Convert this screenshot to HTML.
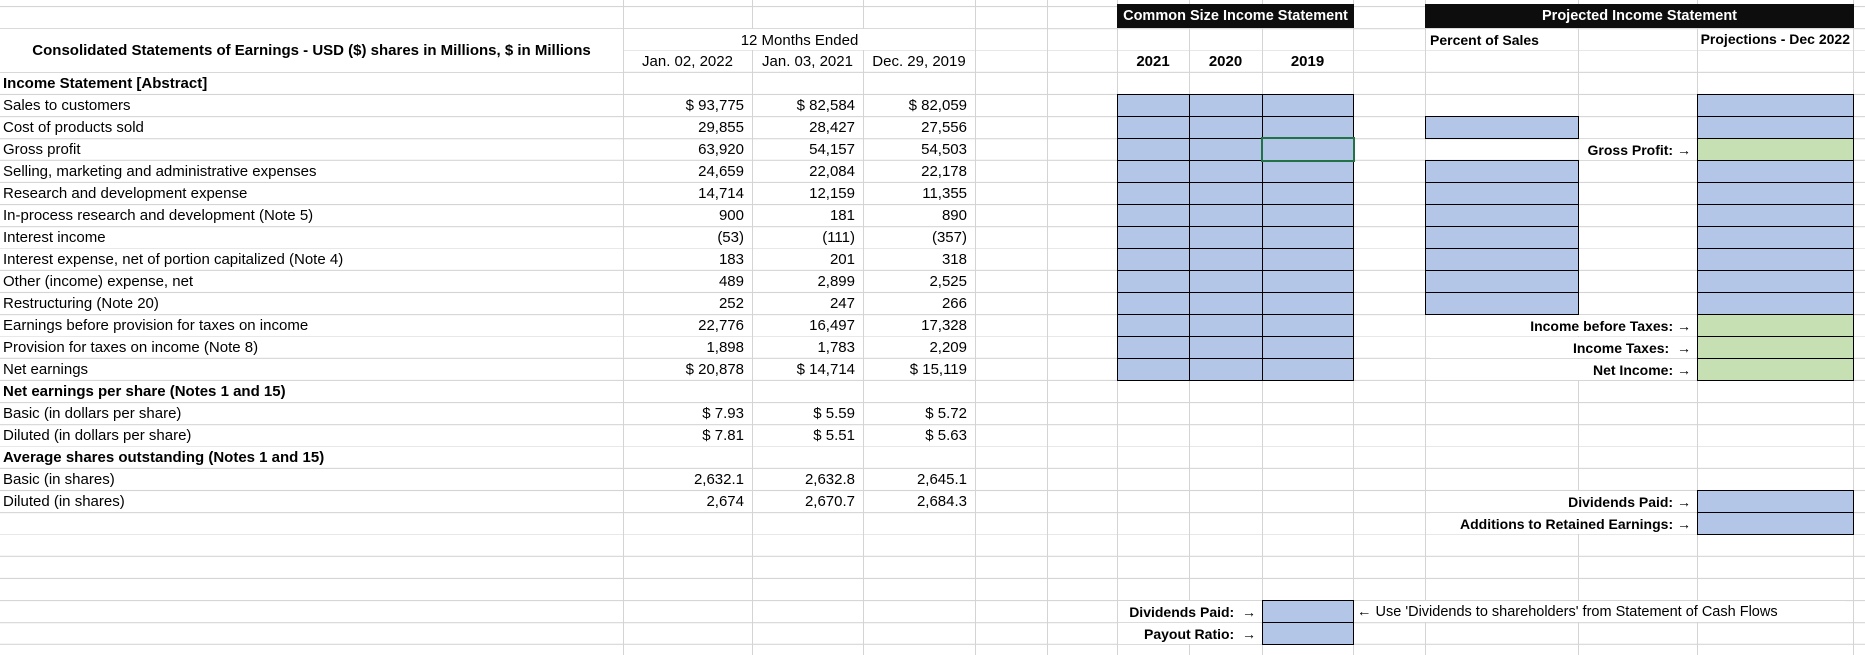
<!DOCTYPE html>
<html><head><meta charset="utf-8">
<style>
html,body{margin:0;padding:0}
body{width:1865px;height:655px;position:relative;overflow:hidden;background:#fff;
background-image:repeating-linear-gradient(180deg,#d4d4d4 0 1px,transparent 1px 22px);background-position:0 6px;background-repeat:repeat;
font-family:"Liberation Sans",Arial,sans-serif;font-size:15px;color:#000}
.v{position:absolute;top:0;width:1px;height:655px;background:#d4d4d4}
.c{position:absolute;height:22px;line-height:23px;white-space:nowrap;box-sizing:border-box}
.r{text-align:right;padding-right:8px}
.m{text-align:center}
.b{font-weight:bold}
.w{background:#fff}
.s{font-size:14px}
.bx{position:absolute;box-sizing:border-box;border:1px solid #000;background:#b4c6e7;height:23px}
.g{background:#c6e0b4}
.hd{position:absolute;background:#0d0d0d;color:#fff;font-weight:bold;text-align:center;height:24px;line-height:24px;top:4px;font-size:14.5px;white-space:nowrap;overflow:hidden}
</style></head><body>
<div class="v" style="left:623px"></div><div class="v" style="left:752px"></div><div class="v" style="left:863px"></div>
<div class="v" style="left:975px"></div><div class="v" style="left:1047px"></div><div class="v" style="left:1117px"></div>
<div class="v" style="left:1189px"></div><div class="v" style="left:1262px"></div><div class="v" style="left:1353px"></div>
<div class="v" style="left:1425px"></div><div class="v" style="left:1578px"></div><div class="v" style="left:1697px"></div>
<div class="v" style="left:1853px"></div>

<div class="c w b m" style="left:0;top:29px;width:623px;height:43px;line-height:43px">Consolidated Statements of Earnings - USD ($) shares in Millions, $ in Millions</div>
<div class="c w m" style="left:624px;top:29px;width:351px;height:21px">12 Months Ended</div>
<div class="c m" style="left:623px;top:50px;width:129px">Jan. 02, 2022</div>
<div class="c m" style="left:752px;top:50px;width:111px">Jan. 03, 2021</div>
<div class="c m" style="left:863px;top:50px;width:112px">Dec. 29, 2019</div>

<div class="hd" style="left:1117px;width:237px">Common Size Income Statement</div>
<div class="hd" style="left:1425px;width:429px">Projected Income Statement</div>
<div class="c b w s" style="left:1426px;top:29px;width:150px;height:21px;padding-left:4px">Percent of Sales</div>
<div class="c b r s" style="left:1697px;top:28px;width:156px;padding-right:3px">Projections - Dec 2022</div>
<div class="c b m" style="left:1117px;top:50px;width:72px">2021</div>
<div class="c b m" style="left:1189px;top:50px;width:73px">2020</div>
<div class="c b m" style="left:1262px;top:50px;width:91px">2019</div>

<div class="c b" style="left:3px;top:72px">Income Statement [Abstract]</div>
<div class="c" style="left:3px;top:94px">Sales to customers</div>
<div class="c" style="left:3px;top:116px">Cost of products sold</div>
<div class="c" style="left:3px;top:138px">Gross profit</div>
<div class="c" style="left:3px;top:160px">Selling, marketing and administrative expenses</div>
<div class="c" style="left:3px;top:182px">Research and development expense</div>
<div class="c" style="left:3px;top:204px">In-process research and development (Note 5)</div>
<div class="c" style="left:3px;top:226px">Interest income</div>
<div class="c" style="left:3px;top:248px">Interest expense, net of portion capitalized (Note 4)</div>
<div class="c" style="left:3px;top:270px">Other (income) expense, net</div>
<div class="c" style="left:3px;top:292px">Restructuring (Note 20)</div>
<div class="c" style="left:3px;top:314px">Earnings before provision for taxes on income</div>
<div class="c" style="left:3px;top:336px">Provision for taxes on income (Note 8)</div>
<div class="c" style="left:3px;top:358px">Net earnings</div>
<div class="c b" style="left:3px;top:380px">Net earnings per share (Notes 1 and 15)</div>
<div class="c" style="left:3px;top:402px">Basic (in dollars per share)</div>
<div class="c" style="left:3px;top:424px">Diluted (in dollars per share)</div>
<div class="c b" style="left:3px;top:446px">Average shares outstanding (Notes 1 and 15)</div>
<div class="c" style="left:3px;top:468px">Basic (in shares)</div>
<div class="c" style="left:3px;top:490px">Diluted (in shares)</div>

<div style="position:absolute;left:623px;top:94px;width:129px">
<div class="c r" style="top:0;width:129px">$ 93,775</div><div class="c r" style="top:22px;width:129px">29,855</div>
<div class="c r" style="top:44px;width:129px">63,920</div><div class="c r" style="top:66px;width:129px">24,659</div>
<div class="c r" style="top:88px;width:129px">14,714</div><div class="c r" style="top:110px;width:129px">900</div>
<div class="c r" style="top:132px;width:129px">(53)</div><div class="c r" style="top:154px;width:129px">183</div>
<div class="c r" style="top:176px;width:129px">489</div><div class="c r" style="top:198px;width:129px">252</div>
<div class="c r" style="top:220px;width:129px">22,776</div><div class="c r" style="top:242px;width:129px">1,898</div>
<div class="c r" style="top:264px;width:129px">$ 20,878</div>
<div class="c r" style="top:308px;width:129px">$ 7.93</div><div class="c r" style="top:330px;width:129px">$ 7.81</div>
<div class="c r" style="top:374px;width:129px">2,632.1</div><div class="c r" style="top:396px;width:129px">2,674</div>
</div>
<div style="position:absolute;left:752px;top:94px;width:111px">
<div class="c r" style="top:0;width:111px">$ 82,584</div><div class="c r" style="top:22px;width:111px">28,427</div>
<div class="c r" style="top:44px;width:111px">54,157</div><div class="c r" style="top:66px;width:111px">22,084</div>
<div class="c r" style="top:88px;width:111px">12,159</div><div class="c r" style="top:110px;width:111px">181</div>
<div class="c r" style="top:132px;width:111px">(111)</div><div class="c r" style="top:154px;width:111px">201</div>
<div class="c r" style="top:176px;width:111px">2,899</div><div class="c r" style="top:198px;width:111px">247</div>
<div class="c r" style="top:220px;width:111px">16,497</div><div class="c r" style="top:242px;width:111px">1,783</div>
<div class="c r" style="top:264px;width:111px">$ 14,714</div>
<div class="c r" style="top:308px;width:111px">$ 5.59</div><div class="c r" style="top:330px;width:111px">$ 5.51</div>
<div class="c r" style="top:374px;width:111px">2,632.8</div><div class="c r" style="top:396px;width:111px">2,670.7</div>
</div>
<div style="position:absolute;left:863px;top:94px;width:112px">
<div class="c r" style="top:0;width:112px">$ 82,059</div><div class="c r" style="top:22px;width:112px">27,556</div>
<div class="c r" style="top:44px;width:112px">54,503</div><div class="c r" style="top:66px;width:112px">22,178</div>
<div class="c r" style="top:88px;width:112px">11,355</div><div class="c r" style="top:110px;width:112px">890</div>
<div class="c r" style="top:132px;width:112px">(357)</div><div class="c r" style="top:154px;width:112px">318</div>
<div class="c r" style="top:176px;width:112px">2,525</div><div class="c r" style="top:198px;width:112px">266</div>
<div class="c r" style="top:220px;width:112px">17,328</div><div class="c r" style="top:242px;width:112px">2,209</div>
<div class="c r" style="top:264px;width:112px">$ 15,119</div>
<div class="c r" style="top:308px;width:112px">$ 5.72</div><div class="c r" style="top:330px;width:112px">$ 5.63</div>
<div class="c r" style="top:374px;width:112px">2,645.1</div><div class="c r" style="top:396px;width:112px">2,684.3</div>
</div>

<div style="position:absolute;left:1117px;top:94px;width:237px;height:287px;box-sizing:border-box;border:1px solid #000;background:#b4c6e7;
background-image:repeating-linear-gradient(180deg,transparent 0 21px,#000 21px 22px),linear-gradient(90deg,transparent 71px,#000 71px 72px,transparent 72px 144px,#000 144px 145px,transparent 145px)"></div>
<div style="position:absolute;left:1261px;top:137px;width:94px;height:25px;box-sizing:border-box;border:2px solid #217346"></div>

<div class="bx" style="left:1425px;top:116px;width:154px"></div>
<div style="position:absolute;left:1425px;top:160px;width:154px;height:155px;box-sizing:border-box;border:1px solid #000;background:#b4c6e7;background-image:repeating-linear-gradient(180deg,transparent 0 21px,#000 21px 22px)"></div>

<div style="position:absolute;left:1697px;top:94px;width:157px;height:287px;box-sizing:border-box;border:1px solid #000;background:#b4c6e7;
background-image:repeating-linear-gradient(180deg,transparent 0 21px,#000 21px 22px)"></div>
<div class="bx g" style="left:1697px;top:138px;width:157px"></div>
<div class="bx g" style="left:1697px;top:314px;width:157px"></div>
<div class="bx g" style="left:1697px;top:336px;width:157px"></div>
<div class="bx g" style="left:1697px;top:358px;width:157px"></div>
<div class="bx" style="left:1697px;top:490px;width:157px"></div>
<div class="bx" style="left:1697px;top:512px;width:157px"></div>

<div class="c b r w s" style="left:1580px;top:139px;width:116px;height:21px;padding-right:5px">Gross Profit: →</div>
<div class="c b r w s" style="left:1430px;top:315px;width:266px;height:21px;padding-right:5px">Income before Taxes: →</div>
<div class="c b r w s" style="left:1430px;top:337px;width:266px;height:21px;padding-right:5px">Income Taxes: &nbsp;→</div>
<div class="c b r w s" style="left:1430px;top:359px;width:266px;height:21px;padding-right:5px">Net Income: →</div>
<div class="c b r w s" style="left:1430px;top:491px;width:266px;height:21px;padding-right:5px">Dividends Paid: →</div>
<div class="c b r w s" style="left:1430px;top:513px;width:266px;height:21px;padding-right:5px">Additions to Retained Earnings: →</div>

<div class="bx" style="left:1262px;top:600px;width:92px"></div>
<div class="bx" style="left:1262px;top:622px;width:92px"></div>
<div class="c b r w s" style="left:1118px;top:601px;width:143px;height:21px;padding-right:5px">Dividends Paid: &nbsp;→</div>
<div class="c b r w s" style="left:1118px;top:623px;width:143px;height:21px;padding-right:5px">Payout Ratio: &nbsp;→</div>
<div class="c w" style="left:1355px;top:601px;width:490px;height:21px;padding-left:2px;font-size:14.5px">← Use 'Dividends to shareholders' from Statement of Cash Flows</div>
</body></html>
